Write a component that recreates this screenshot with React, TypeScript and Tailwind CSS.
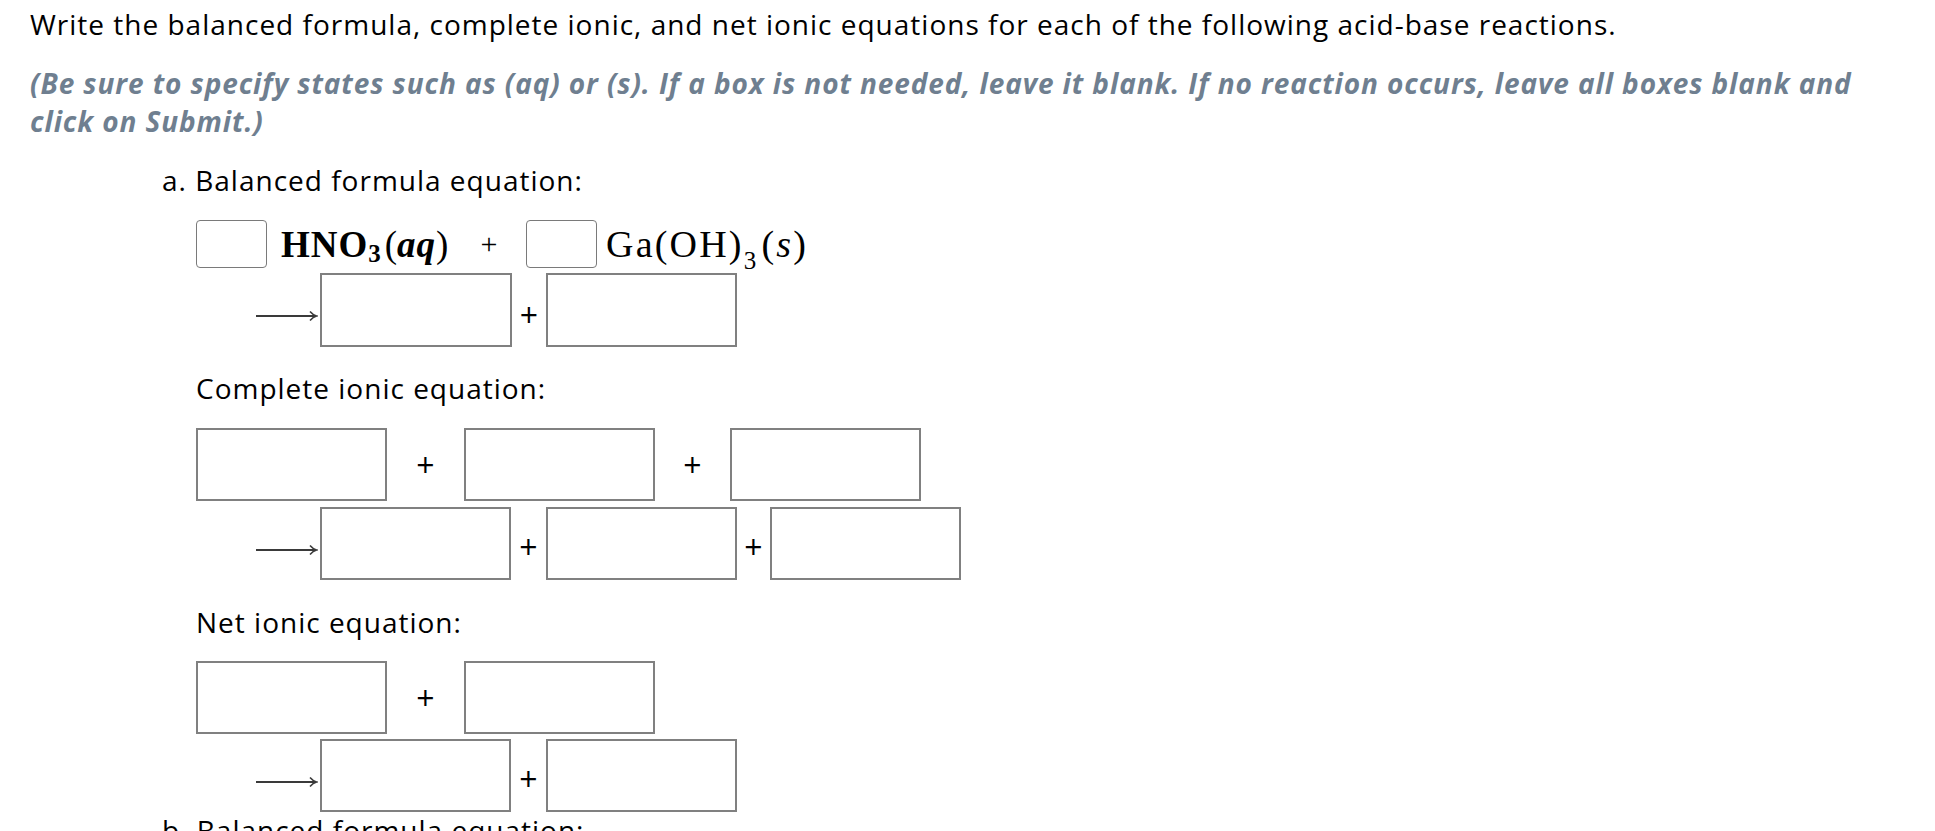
import React from "react";

const Box = ({ w = 191, h = 73 }: { w?: number; h?: number }) => (
  <div className="box-border border-2 border-[#808080] bg-white" style={{ width: w, height: h }} />
);

const Coef = () => (
  <div className="box-border w-[71px] h-[48px] rounded-[4px] border-[1.5px] border-[#7a7a7a] bg-white" />
);

const Arrow = () => (
  <svg width="62" height="14" viewBox="0 0 62 14" className="block">
    <line x1="0" y1="7" x2="59" y2="7" stroke="#3a3a3a" strokeWidth="2" />
    <path d="M54 2.5 Q57 6 60.5 7 Q57 8 54 11.5" fill="none" stroke="#3a3a3a" strokeWidth="1.6" />
  </svg>
);

const Plus = ({ w, cls = "" }: { w: number; cls?: string }) => (
  <div className={"flex items-center justify-center text-[32px] leading-none text-black " + cls} style={{ width: w }}>
    +
  </div>
);

const ArrowCell = () => (
  <div className="w-[64px] ml-[60px] flex items-center pt-[12px]">
    <Arrow />
  </div>
);

export default function App() {
  return (
    <div className="min-h-screen bg-white px-[30px] pt-[6px] font-['Open_Sans',sans-serif] text-black">
      <p className="text-[28px] leading-[36px] tracking-[1px]">
        Write the balanced formula, complete ionic, and net ionic equations for each of the following acid-base reactions.
      </p>
      <p className="mt-[22px] text-[28px] leading-[38px] tracking-[0.9px] font-bold italic text-[#6f7f90]">
        (Be sure to specify states such as (aq) or (s). If a box is not needed, leave it blank. If no reaction occurs, leave all boxes blank and click on Submit.)
      </p>

      <div className="ml-[132px] mt-[22px]">
        <p className="text-[28px] leading-[36px] tracking-[1px]">a. Balanced formula equation:</p>

        <div className="ml-[34px]">
          <div className="mt-[22px] flex items-center h-[48px]">
            <Coef />
            <div className="ml-[14px] w-[166px] whitespace-nowrap font-['Liberation_Serif',serif] text-[37px] leading-none">
              <span className="font-bold tracking-[1px]">HNO</span>
              <span className="font-bold text-[25px] relative top-[5px]">3</span>
              <span className="ml-[4px]">(</span>
              <span className="font-bold italic tracking-[1px]">aq</span>
              <span>)</span>
            </div>
            <div className="w-[79px] flex justify-center pl-[5px] font-['Liberation_Serif',serif] text-[30px] leading-none">+</div>
            <Coef />
            <div className="ml-[9px] whitespace-nowrap font-['Liberation_Serif',serif] text-[38px] leading-none tracking-[2.2px]">
              <span>Ga(OH)</span>
              <span className="text-[25px] relative top-[12px]">3</span>
              <span className="ml-[3px]">(</span>
              <span className="italic">s</span>
              <span>)</span>
            </div>
          </div>

          <div className="mt-[5px] flex">
            <ArrowCell />
            <Box h={74} w={192} />
            <Plus w={34} cls="pt-[10px]" />
            <Box h={74} />
          </div>

          <p className="mt-[23px] text-[28px] leading-[36px] tracking-[1px]">Complete ionic equation:</p>

          <div className="mt-[22px] flex">
            <Box />
            <Plus w={77} />
            <Box />
            <Plus w={75} />
            <Box />
          </div>
          <div className="mt-[6px] flex">
            <ArrowCell />
            <Box />
            <Plus w={35} cls="pt-[6px]" />
            <Box />
            <Plus w={33} cls="pt-[6px]" />
            <Box />
          </div>

          <p className="mt-[24px] text-[28px] leading-[36px] tracking-[1px]">Net ionic equation:</p>

          <div className="mt-[21px] flex">
            <Box />
            <Plus w={77} />
            <Box />
          </div>
          <div className="mt-[5px] flex">
            <ArrowCell />
            <Box />
            <Plus w={35} cls="pt-[6px]" />
            <Box />
          </div>
        </div>

        <p className="text-[28px] leading-[36px] tracking-[1px]">b. Balanced formula equation:</p>
      </div>
    </div>
  );
}
